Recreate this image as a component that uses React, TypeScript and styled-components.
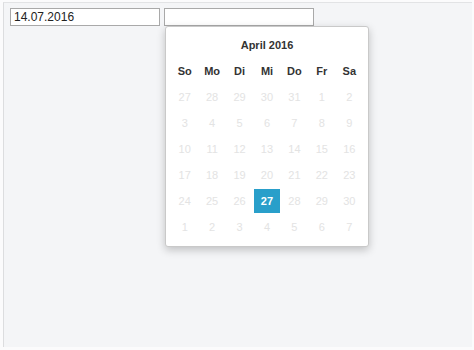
import React from "react";
import styled, { createGlobalStyle } from "styled-components";

const GlobalStyle = createGlobalStyle`
  html, body {
    margin: 0;
    padding: 0;
    background: #fbfbfc;
    font-family: "Liberation Sans", Arial, sans-serif;
  }
`;

const weekdays = ["So", "Mo", "Di", "Mi", "Do", "Fr", "Sa"];

const weeks = [
  [27, 28, 29, 30, 31, 1, 2],
  [3, 4, 5, 6, 7, 8, 9],
  [10, 11, 12, 13, 14, 15, 16],
  [17, 18, 19, 20, 21, 22, 23],
  [24, 25, 26, 27, 28, 29, 30],
  [1, 2, 3, 4, 5, 6, 7],
];

export default function App() {
  return (
    <>
      <GlobalStyle />
      <Page>
        <Panel>
          <Fields>
            <DateInput defaultValue="14.07.2016" />
            <DateInput defaultValue="" />
          </Fields>
          <Picker>
            <Title>April 2016</Title>
            <Grid>
              {weekdays.map((d) => (
                <DayName key={d}>{d}</DayName>
              ))}
              {weeks.map((week, w) =>
                week.map((day, i) => (
                  <DayCell key={`${w}-${i}`}>
                    <Day $active={w === 4 && i === 3}>{day}</Day>
                  </DayCell>
                ))
              )}
            </Grid>
          </Picker>
        </Panel>
      </Page>
    </>
  );
}

const Page = styled.div`
  padding-top: 2px;
  height: 348px;
`;

const Panel = styled.div`
  position: relative;
  margin-left: 3px;
  margin-right: 2px;
  height: 345px;
  background: #f4f5f7;
  border-top: 1px solid #e2e3e5;
  border-left: 1px solid #dcdddf;
  box-sizing: border-box;
`;

const Fields = styled.div`
  display: flex;
  gap: 4px;
  padding: 5px 0 0 6px;
`;

const DateInput = styled.input`
  width: 150px;
  height: 18px;
  box-sizing: border-box;
  border: 1px solid #a9a9a9;
  background: #fff;
  padding: 0 3px;
  font-family: "Liberation Sans", Arial, sans-serif;
  font-size: 12px;
  color: #222;
  outline: none;
`;

const Picker = styled.div`
  position: absolute;
  left: 161px;
  top: 23px;
  width: 204px;
  height: 221px;
  box-sizing: border-box;
  padding: 5px 5px 7px;
  background: #fff;
  border: 1px solid #c9c9c9;
  border-radius: 3px;
  box-shadow: 0 3px 8px rgba(0, 0, 0, 0.22);
`;

const Title = styled.div`
  height: 26px;
  line-height: 26px;
  text-align: center;
  font-size: 11px;
  font-weight: bold;
  color: #333;
`;

const Grid = styled.div`
  display: grid;
  grid-template-columns: repeat(7, 1fr);
  grid-auto-rows: 26px;
`;

const DayName = styled.div`
  display: flex;
  align-items: center;
  justify-content: center;
  font-size: 11px;
  font-weight: bold;
  color: #333;
`;

const DayCell = styled.div`
  display: flex;
  align-items: center;
  justify-content: center;
`;

const Day = styled.div<{ $active?: boolean }>`
  width: 26px;
  height: 24px;
  display: flex;
  align-items: center;
  justify-content: center;
  font-size: 11px;
  color: ${(p) => (p.$active ? "#fff" : "#e3e3e3")};
  font-weight: ${(p) => (p.$active ? "bold" : "normal")};
  background: ${(p) => (p.$active ? "#299fca" : "transparent")};
`;
